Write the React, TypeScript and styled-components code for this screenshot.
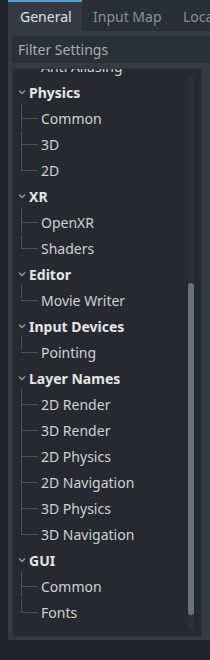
import React from "react";
import styled, { createGlobalStyle } from "styled-components";

const Global = createGlobalStyle`
  html, body { margin: 0; padding: 0; background: #21252b; }
  body { width: 210px; height: 660px; overflow: hidden; font-family: "Noto Sans", "DejaVu Sans", sans-serif; }
  * { box-sizing: border-box; }
`;

const Page = styled.div`
  width: 210px;
  height: 660px;
  padding-left: 8px;
  display: flex;
  flex-direction: column;
  background: #21252b;
`;

const TabBar = styled.div`
  display: flex;
  height: 31px;
  flex-shrink: 0;
  overflow: hidden;
`;

const Tab = styled.div<{ $active?: boolean; $w: number }>`
  width: ${(p) => p.$w}px;
  flex-shrink: 0;
  height: 31px;
  display: flex;
  align-items: center;
  padding-left: ${(p) => (p.$active ? 12 : 11)}px;
  font-size: 14px;
  white-space: nowrap;
  color: ${(p) => (p.$active ? "#dfe0e2" : "#8c9096")};
  background: ${(p) => (p.$active ? "#363b43" : "#2a2e35")};
  border-top: 2px solid ${(p) => (p.$active ? "#579fd6" : "transparent")};
  padding-bottom: 1px;
`;

const Panel = styled.div`
  flex: 0 0 609px;
  background: #363b43;
  padding: 5px 0 3px 4px;
  display: flex;
  flex-direction: column;
  gap: 5px;
`;

const Filter = styled.div`
  height: 27px;
  background: #2b2f36;
  border-radius: 2px 0 0 2px;
  display: flex;
  align-items: center;
  padding-left: 6px;
  font-size: 14px;
  color: #a9acb0;
`;

const TreeBox = styled.div`
  flex: 1;
  margin-right: 8px;
  background: #262a30;
  border: 1px solid #2e333a;
  border-radius: 2px;
  display: flex;
  overflow: hidden;
`;

const List = styled.div`
  flex: 1;
  margin-top: -16px;
`;

const SectionRow = styled.div`
  height: 26px;
  display: flex;
  align-items: center;
  padding-left: 5px;
  font-weight: 700;
  font-size: 14px;
  color: #e4e5e7;
  gap: 3px;
`;

const Chevron = styled.svg`
  width: 8px;
  height: 6px;
  flex-shrink: 0;
`;

const Children = styled.div`
  position: relative;
  margin-left: 8px;
`;

const ChildRow = styled.div<{ $last?: boolean }>`
  height: 26px;
  display: flex;
  align-items: center;
  font-size: 14px;
  color: #cfd1d4;
  padding-left: 20px;
  position: relative;
  &::before {
    content: "";
    position: absolute;
    left: 0;
    top: ${(p) => (p.$first ? -2 : 0)}px;
    height: ${(p) => (p.$last ? 13 : 26)}px;
    border-left: 1px solid #4b5058;
  }
  &::after {
    content: "";
    position: absolute;
    left: 0;
    top: 13px;
    width: 17px;
    border-top: 1px solid #4b5058;
  }
` as any;

const Track = styled.div`
  width: 6px;
  margin: 6px 7px 6px 0;
  background: #2c3036;
  border-radius: 3px;
  display: flex;
  flex-direction: column;
`;

const Grab = styled.div`
  margin-top: 208px;
  height: 332px;
  border-radius: 3px;
  background: #6c7077;
`;

type Section = { title: string; items: string[] };

const sections: Section[] = [
  { title: "Physics", items: ["Common", "3D", "2D"] },
  { title: "XR", items: ["OpenXR", "Shaders"] },
  { title: "Editor", items: ["Movie Writer"] },
  { title: "Input Devices", items: ["Pointing"] },
  {
    title: "Layer Names",
    items: ["2D Render", "3D Render", "2D Physics", "2D Navigation", "3D Physics", "3D Navigation"],
  },
  { title: "GUI", items: ["Common", "Fonts"] },
];

export default function App() {
  return (
    <>
      <Global />
      <Page>
        <TabBar>
          <Tab $active $w={74}>General</Tab>
          <Tab $w={90}>Input Map</Tab>
          <Tab $w={100}>Localization</Tab>
        </TabBar>
        <Panel>
          <Filter>Filter Settings</Filter>
          <TreeBox>
            <List>
              <Children>
                <ChildRow $last>Anti Aliasing</ChildRow>
              </Children>
              {sections.map((s) => (
                <React.Fragment key={s.title}>
                  <SectionRow>
                    <Chevron viewBox="0 0 8 6">
                      <path d="M1 1.5 L4 4.5 L7 1.5" fill="none" stroke="#9a9ea4" strokeWidth="1.3" />
                    </Chevron>
                    {s.title}
                  </SectionRow>
                  <Children>
                    {s.items.map((it, i) => (
                      <ChildRow key={it + i} $first={i === 0} $last={i === s.items.length - 1}>
                        {it}
                      </ChildRow>
                    ))}
                  </Children>
                </React.Fragment>
              ))}
            </List>
            <Track>
              <Grab />
            </Track>
          </TreeBox>
        </Panel>
      </Page>
    </>
  );
}
